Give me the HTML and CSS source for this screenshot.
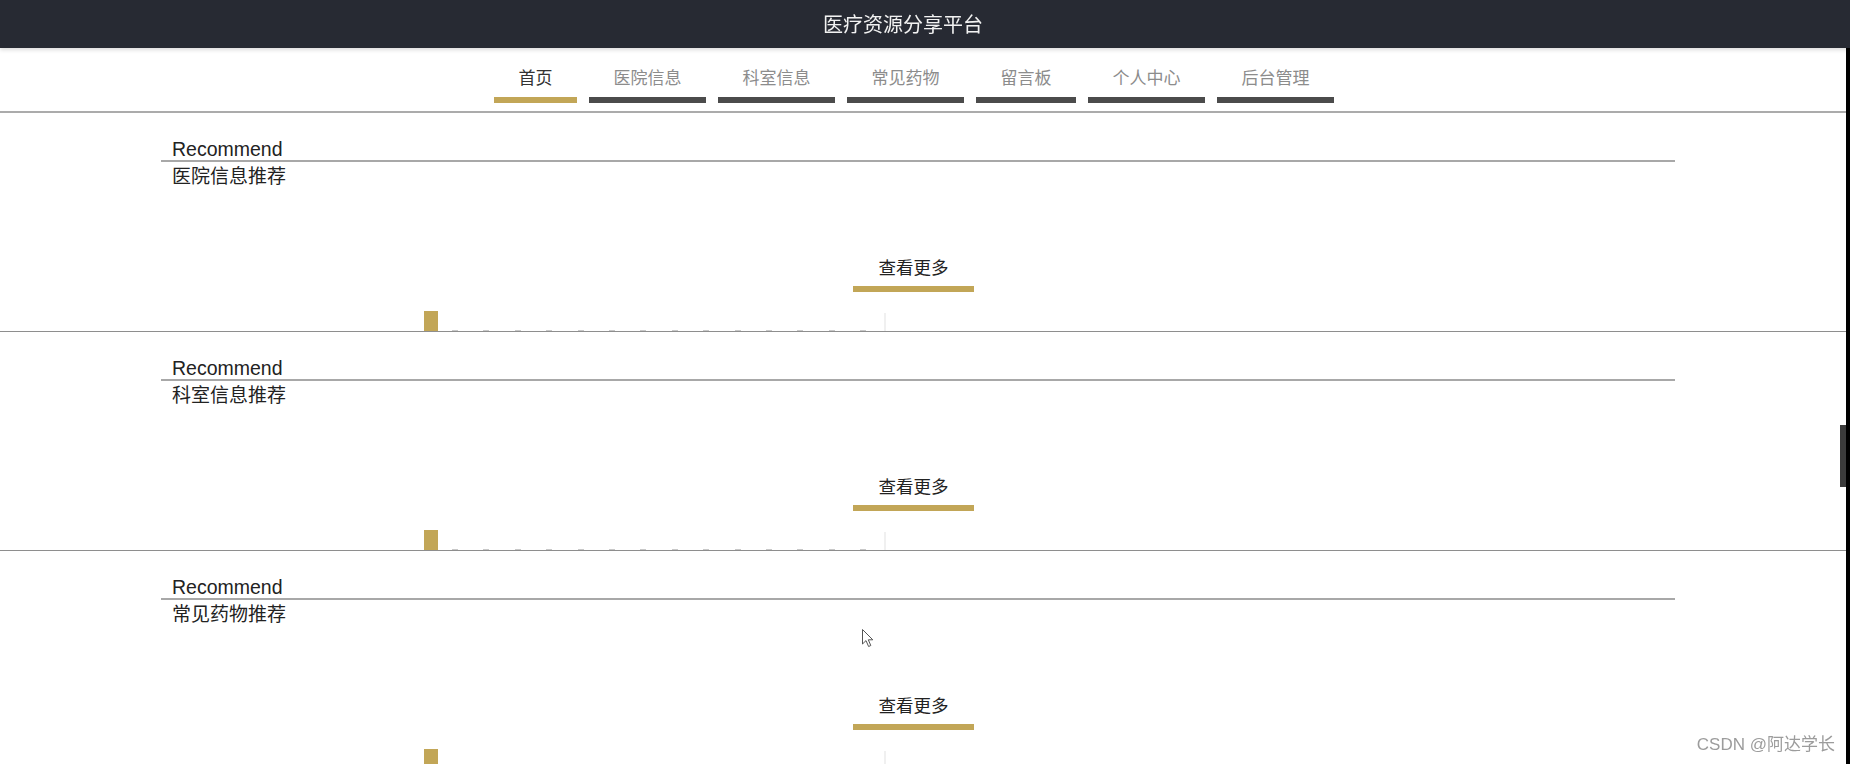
FILE: index.html
```html
<!DOCTYPE html>
<html lang="zh-CN">
<head>
<meta charset="utf-8">
<title>医疗资源分享平台</title>
<link rel="stylesheet" href="styles.css">
</head>
<body>
<header class="header"><div class="header-title">医疗资源分享平台</div></header>
<nav class="nav">
  <div class="nav-item active">首页</div>
  <div class="nav-item">医院信息</div>
  <div class="nav-item">科室信息</div>
  <div class="nav-item">常见药物</div>
  <div class="nav-item">留言板</div>
  <div class="nav-item">个人中心</div>
  <div class="nav-item">后台管理</div>
</nav>
<main>
  <section class="section">
    <div class="rec-head">Recommend</div>
    <div class="rec-title">医院信息推荐</div>
    <div class="more-row"><div class="more">查看更多</div></div>
    <div class="pager">
      <div class="pager-active"></div>
      <div class="pager-dots"><i></i><i></i><i></i><i></i><i></i><i></i><i></i><i></i><i></i><i></i><i></i><i></i><i></i><i></i></div>
      <div class="pager-rail"></div>
    </div>
  </section>
  <section class="section">
    <div class="rec-head">Recommend</div>
    <div class="rec-title">科室信息推荐</div>
    <div class="more-row"><div class="more">查看更多</div></div>
    <div class="pager">
      <div class="pager-active"></div>
      <div class="pager-dots"><i></i><i></i><i></i><i></i><i></i><i></i><i></i><i></i><i></i><i></i><i></i><i></i><i></i><i></i></div>
      <div class="pager-rail"></div>
    </div>
  </section>
  <section class="section">
    <div class="rec-head">Recommend</div>
    <div class="rec-title">常见药物推荐</div>
    <div class="more-row"><div class="more">查看更多</div></div>
    <div class="pager">
      <div class="pager-active"></div>
      <div class="pager-dots"><i></i><i></i><i></i><i></i><i></i><i></i><i></i><i></i><i></i><i></i><i></i><i></i><i></i><i></i></div>
      <div class="pager-rail"></div>
    </div>
  </section>
</main>
<svg class="cursor" width="13" height="20" viewBox="0 0 13 20"><path d="M1.5 1.5 L1.5 16 L5 12.6 L7.6 18.5 L9.8 17.5 L7.3 11.8 L11.8 11.8 Z" fill="#fff" stroke="#555" stroke-width="1" stroke-linejoin="round"/></svg>
<div class="watermark">CSDN @阿达学长</div>
<div class="scroll-track"></div>
<div class="scroll-thumb"></div>
</body>
</html>
```
FILE: styles.css
```css
html, body {
  margin: 0;
  height: 764px;
  overflow: hidden;
  background: #fff;
}
body {
  font-family: "Liberation Sans", "Noto Sans CJK SC", sans-serif;
  color: #222;
}
.header {
  position: relative;
  z-index: 1;
  height: 48px;
  background: #272a33;
  display: flex;
  align-items: center;
  justify-content: center;
  padding-right: 44px;
  box-shadow: 0 2px 4px rgba(0, 0, 0, 0.14);
}
.header-title {
  color: #f2f2f2;
  font-family: "Noto Sans CJK SC", sans-serif;
  font-size: 20px;
  line-height: 24px;
}
.nav {
  display: flex;
  justify-content: center;
  gap: 12px;
  padding: 19px 22px 8px 0;
  border-bottom: 2px solid #ababab;
}
.nav-item {
  font-family: "Noto Sans CJK SC", sans-serif;
  font-size: 17px;
  line-height: 20px;
  padding: 0 24.5px 10px;
  border-bottom: 6px solid #4b4b4b;
  color: #8c8c8c;
}
.nav-item.active {
  color: #333;
  border-bottom-color: #c2a657;
}
.section {
  padding-top: 25px;
  border-bottom: 1px solid #8e8e8e;
}
.rec-head {
  box-sizing: border-box;
  width: 1514px;
  margin-left: 161px;
  padding-left: 11px;
  font-size: 19.5px;
  line-height: 22px;
  border-bottom: 2px solid #a8a8a8;
  color: #222;
}
.rec-title {
  margin: 4px 0 0 161px;
  padding-left: 11px;
  font-size: 19px;
  line-height: 22px;
  color: #222;
}
.more-row {
  display: flex;
  justify-content: center;
  padding-right: 23px;
  margin-top: 70px;
}
.more {
  width: 121px;
  text-align: center;
  font-size: 17.5px;
  line-height: 20px;
  padding-bottom: 8px;
  border-bottom: 6px solid #c2a657;
  color: #222;
}
.pager {
  display: flex;
  align-items: flex-end;
  height: 20px;
  margin-top: 19px;
  padding-left: 424px;
}
.pager-active {
  width: 14px;
  height: 20px;
  background: #c2a657;
}
.pager-dots {
  display: flex;
  gap: 25.4px;
  margin-left: 14px;
}
.pager-dots i {
  display: block;
  width: 6px;
  height: 1px;
  background: #c8c8c8;
}
.pager-rail {
  width: 2px;
  height: 18px;
  margin-left: 18px;
  background: #f0f0f0;
}
.cursor {
  position: absolute;
  left: 861px;
  top: 628px;
}
.watermark {
  position: fixed;
  right: 15px;
  bottom: 9px;
  font-size: 17px;
  line-height: 20px;
  color: #9c9c9c;
}
.scroll-track {
  position: fixed;
  top: 0;
  right: 0;
  width: 4px;
  height: 100%;
  background: #000;
}
.scroll-thumb {
  position: fixed;
  top: 425px;
  right: 4px;
  width: 6px;
  height: 62px;
  background: #3b3b3b;
}
```
